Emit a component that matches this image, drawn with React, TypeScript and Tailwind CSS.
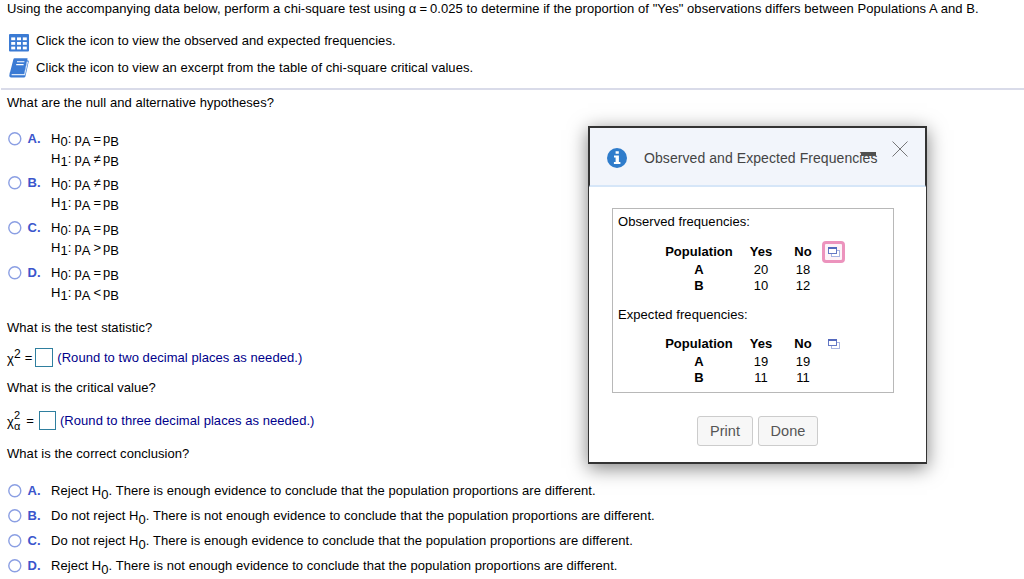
import clsx from "clsx";
import type { ReactNode } from "react";

type Relation = "=" | "≠" | ">" | "<";

interface Hypothesis {
  label: string;
  h0: Relation;
  h1: Relation;
  className: string;
}

const hypotheses: Hypothesis[] = [
  { label: "A.", h0: "=", h1: "≠", className: "h-[44px]" },
  { label: "B.", h0: "≠", h1: "=", className: "h-[45px]" },
  { label: "C.", h0: "=", h1: ">", className: "h-[45px]" },
  { label: "D.", h0: "=", h1: "<", className: "h-[45px]" },
];

const conclusions = [
  { label: "A.", lead: "Reject H", rest: "There is enough evidence to conclude that the population proportions are different." },
  { label: "B.", lead: "Do not reject H", rest: "There is not enough evidence to conclude that the population proportions are different." },
  { label: "C.", lead: "Do not reject H", rest: "There is enough evidence to conclude that the population proportions are different." },
  { label: "D.", lead: "Reject H", rest: "There is not enough evidence to conclude that the population proportions are different." },
];

const observed = [
  ["A", "20", "18"],
  ["B", "10", "12"],
];

const expected = [
  ["A", "19", "19"],
  ["B", "11", "11"],
];

export default function App() {
  return (
    <div className="relative h-[579px] w-[1024px] overflow-hidden bg-white font-['Liberation_Sans',Arial,sans-serif] text-[13px] leading-[15px] tracking-[0.055px] text-black">
      <main className="flex flex-col whitespace-nowrap pt-px">
        <p className="pl-[7px]">
          Using the accompanying data below, perform a chi-square test using α<span className="mx-[3px]">=</span>0.025 to
          determine if the proportion of "Yes" observations differs between Populations A and B.
        </p>
        <div className="mt-[17px] flex h-[25px] items-start pl-[9px]">
          <TableIcon />
          <span className="ml-[7px]">Click the icon to view the observed and expected frequencies.</span>
        </div>
        <div className="flex h-[30px] items-start pl-[9px]">
          <BookIcon />
          <span className="ml-[7px] mt-[2px]">
            Click the icon to view an excerpt from the table of chi-square critical values.
          </span>
        </div>
        <hr className="ml-px h-[2px] border-0 bg-[#d9dbe9]" />

        <p className="mt-[5px] pl-[7px]">What are the null and alternative hypotheses?</p>
        <div className="mt-[21px] pl-[8px]">
          {hypotheses.map((item) => (
            <div key={item.label} className={clsx("flex items-start", item.className)}>
              <Radio />
              <OptionLabel>{item.label}</OptionLabel>
              <div>
                <HypothesisLine index="0" relation={item.h0} />
                <HypothesisLine index="1" relation={item.h1} />
              </div>
            </div>
          ))}
        </div>

        <p className="mt-[10px] pl-[7px]">What is the test statistic?</p>
        <div className="mt-[12px] flex h-[21px] items-center pl-[7px]">
          <span className="mt-px">χ</span>
          <span className="mb-[8px] text-[12px] leading-none">2</span>
          <span className="ml-[4px]">=</span>
          <AnswerBox className="ml-[3px] w-[18px]" />
          <span className="ml-[4px] text-[#00008b]">(Round to two decimal places as needed.)</span>
        </div>
        <p className="mt-[12px] pl-[7px]">What is the critical value?</p>
        <div className="mt-[15px] flex h-[21px] items-center pl-[7px]">
          <span className="mt-px">χ</span>
          <span className="flex flex-col text-[11px] leading-[11px]">
            <span>2</span>
            <span>α</span>
          </span>
          <span className="ml-[6px]">=</span>
          <AnswerBox className="ml-[5px] w-[17px]" />
          <span className="ml-[4px] text-[#00008b]">(Round to three decimal places as needed.)</span>
        </div>
        <p className="mt-[15px] pl-[7px]">What is the correct conclusion?</p>
        <div className="mt-[22px] pl-[8px]">
          {conclusions.map((item) => (
            <div key={item.label} className="flex h-[25px] items-start">
              <Radio />
              <OptionLabel>{item.label}</OptionLabel>
              <span>
                {item.lead}
                <span className="align-[-4px] leading-none">0</span>. {item.rest}
              </span>
            </div>
          ))}
        </div>
      </main>
      <FrequencyDialog />
    </div>
  );
}

function Sub({ children }: { children: ReactNode }) {
  return <span className="align-[-3px] leading-none">{children}</span>;
}

function Radio() {
  return (
    <svg width="14" height="14" viewBox="0 0 14 14" className="mt-px shrink-0">
      <circle cx="6.8" cy="6.8" r="6" fill="#fff" stroke="#8b9fe3" strokeWidth="1.4" />
    </svg>
  );
}

function OptionLabel({ children }: { children: ReactNode }) {
  return <span className="ml-[5.5px] w-[23.5px] shrink-0 font-bold text-[#3b55cc]">{children}</span>;
}

function HypothesisLine({ index, relation }: { index: string; relation: Relation }) {
  return (
    <div className="flex h-[20px]">
      <span>
        H<Sub>{index}</Sub>:
      </span>
      <span className="ml-[3px]">
        p<Sub>A</Sub>
      </span>
      <span className="ml-[3px] w-[9.5px]">{relation}</span>
      <span>
        p<Sub>B</Sub>
      </span>
    </div>
  );
}

function AnswerBox({ className }: { className?: string }) {
  return <span className={clsx("h-[19px] border border-[#2f7f9f] bg-white", className)} />;
}

function FrequencyDialog() {
  return (
    <section
      role="dialog"
      className="absolute left-[588px] top-[126px] flex h-[338px] w-[339px] flex-col border border-b-2 border-t-2 border-[#333] bg-white shadow-[0_4px_18px_rgba(0,0,0,0.5)]"
    >
      <header className="relative flex h-[59px] shrink-0 items-center border-x border-b-2 border-b-[#d6e6f8] border-x-[#333] bg-[#f2f5fb] pl-[17px] pt-[2px]">
        <InfoIcon />
        <h2 className="ml-[17px] mt-[2px] whitespace-nowrap text-[14px] leading-[17px] tracking-[0.07px] text-[#444]">
          Observed and Expected Frequencies
        </h2>
        <span className="absolute left-[271px] top-[24px] h-[4px] w-[15px] bg-[#505050]" />
        <svg className="absolute left-[302px] top-[13px]" width="16" height="16" viewBox="0 0 16 16">
          <path d="M0.5 0.5L15.5 15.5M15.5 0.5L0.5 15.5" stroke="#555" strokeWidth="0.8" fill="none" />
        </svg>
      </header>
      <div className="ml-[23px] mt-[21px] h-[185px] w-[282px] shrink-0 border border-[#b8b8b8] pl-[5px] pt-[5px]">
        <p>Observed frequencies:</p>
        <FrequencyTable rows={observed} highlighted className="mt-[15px]" />
        <p className="mt-[13px]">Expected frequencies:</p>
        <FrequencyTable rows={expected} className="mt-[14px]" />
      </div>
      <footer className="mt-[23px] flex justify-center gap-[5px] text-[14.5px] text-[#555]">
        <button type="button" className="h-[30px] w-[56px] rounded-[3px] border border-[#ccc] bg-[#f7f7f7]">
          Print
        </button>
        <button type="button" className="h-[30px] w-[60px] rounded-[3px] border border-[#ccc] bg-[#f7f7f7]">
          Done
        </button>
      </footer>
    </section>
  );
}

interface FrequencyTableProps {
  rows: string[][];
  highlighted?: boolean;
  className?: string;
}

function FrequencyTable({ rows, highlighted, className }: FrequencyTableProps) {
  return (
    <div className={clsx("ml-[46px] text-center", className)}>
      <div className="flex h-[18px] items-start font-bold">
        <span className="w-[70px]">Population</span>
        <span className="ml-[12px] w-[30px]">Yes</span>
        <span className="ml-[12px] w-[30px]">No</span>
        <span
          className={clsx(
            "-my-[3px] ml-[4px] flex h-[22px] w-[23px] items-center justify-center rounded-[4px]",
            highlighted && "border-[3px] border-[#ec93bd] bg-[#fdf3f8]"
          )}
        >
          <CopyIcon />
        </span>
      </div>
      {rows.map(([name, yes, no]) => (
        <div key={name} className="flex h-[16px]">
          <span className="w-[70px] font-bold">{name}</span>
          <span className="ml-[12px] w-[30px]">{yes}</span>
          <span className="ml-[12px] w-[30px]">{no}</span>
        </div>
      ))}
    </div>
  );
}

function CopyIcon() {
  return (
    <svg width="12" height="11" viewBox="0 0 12 11" className="shrink-0">
      <rect x="3.5" y="3.5" width="8" height="6" fill="#fff" stroke="#a9b5e2" />
      <rect x="0.5" y="0.5" width="8" height="6" fill="#fff" stroke="#6478c4" />
      <path d="M0 1H9" stroke="#5469bd" strokeWidth="2" />
    </svg>
  );
}

function InfoIcon() {
  return (
    <svg width="20" height="20" viewBox="0 0 20 20" className="shrink-0">
      <circle cx="10" cy="10" r="10" fill="#2f7ccb" />
      <path d="M8.6 3.2h3.2v2.6H8.6zM7 7.6h4.9v6.5h1.5v2H6.9v-2h1.7V9.6H7z" fill="#fff" />
    </svg>
  );
}

function TableIcon() {
  return (
    <svg width="20" height="18" viewBox="0 0 20 18" className="mt-px shrink-0">
      <rect width="20" height="17.5" rx="1" fill="#3b7bd4" />
      <g fill="#fff">
        {[3.4, 8, 12.6].map((y) => (
          <g key={y}>
            <rect x="2.2" y={y} width="4" height="2.8" />
            <rect x="8" y={y} width="4" height="2.8" />
            <rect x="13.8" y={y} width="4" height="2.8" />
          </g>
        ))}
      </g>
    </svg>
  );
}

function BookIcon() {
  return (
    <svg width="20" height="20" viewBox="0 0 20 20" className="shrink-0">
      <path d="M5.5 0.3H18.6L15.2 15.2H0.8L4.4 1.3Q4.6 0.3 5.5 0.3Z" fill="#3b7bd4" />
      <path d="M18.6 1.6L19.8 3.2L16.4 18.5Q16.1 19.5 15 19.5H2Q0.3 19.5 0.3 17.8L0.8 14.5H15Z" fill="#3b7bd4" />
      <path d="M18.6 3.6L15.6 16.6H2.6" fill="none" stroke="#dbe7f8" strokeWidth="1.1" />
      <path d="M8 3.8H15.4M7.2 6.6H14.6" stroke="#fff" strokeWidth="1.1" />
    </svg>
  );
}
